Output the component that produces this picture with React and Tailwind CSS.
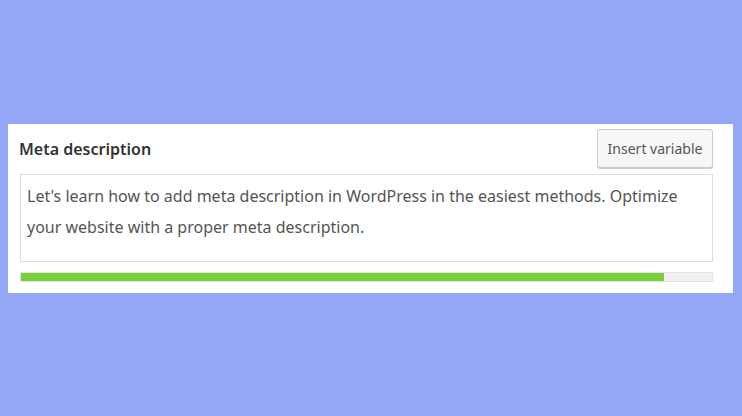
export default function App() {
    return (
        <div className="w-[742px] h-[416px] bg-[#94a6f6] flex items-center px-2" style={{ fontFamily: '"Noto Sans", "Open Sans", sans-serif' }}>
            <div className="w-[725px] h-[169px] bg-white pl-3 pr-5 pt-[5px]">
                {/* header */}
                <div className="flex items-center justify-between">
                    <h2 className="text-[16px] font-semibold text-[#333] mt-[2px] -ml-px">Meta description</h2>
                    <button className="h-[39px] w-[116px] bg-[#f7f7f7] border border-[#ccc] rounded-[3px] shadow-[0_1px_0_#ccc] text-[14px] text-[#555]">
                        Insert variable
                    </button>
                </div>

                {/* textarea */}
                <div className="mt-[6px] h-[88px] border border-[#ddd] px-[6px] pt-[6px] text-[16px] leading-[31px] text-[#555]">
                    Let's learn how to add meta description in WordPress in the easiest methods. Optimize your website with a proper meta description.
                </div>

                {/* progress */}
                <div className="mt-[10px] h-[10px] bg-[#f1f1f1] border border-[#e4e4e4]">
                    <div className="h-full w-[93%] bg-[#7ad03a]" />
                </div>
            </div>
        </div>
    );
}
